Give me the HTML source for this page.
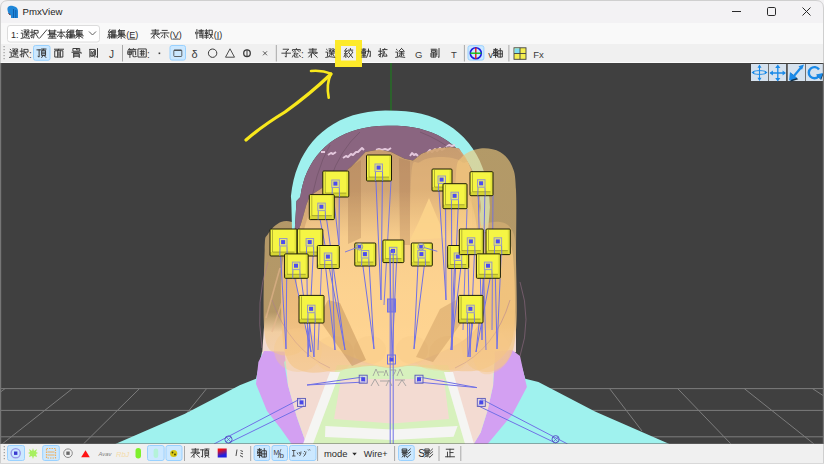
<!DOCTYPE html>
<html><head><meta charset="utf-8">
<style>
*{box-sizing:border-box;margin:0;padding:0}
html,body{width:824px;height:464px;overflow:hidden;background:#f0f0f0;font-family:"Liberation Sans",sans-serif;}
.abs{position:absolute}
</style></head><body>
<div class="abs" style="left:0;top:0;width:824px;height:23px;background:#f3f2f4"></div>
<div class="abs" style="left:0;top:23px;width:824px;height:21px;background:#f9f9f9"></div>
<div class="abs" style="left:0;top:44px;width:824px;height:19px;background:#f0f0f0"></div>
<div class="abs" style="left:0;top:62px;width:824px;height:1px;background:#fbfbfb"></div>
<div class="abs" style="left:0;top:444px;width:824px;height:20px;background:#f0f0f0"></div>
<svg class="abs" style="left:0;top:0" width="824" height="464" viewBox="0 0 824 464">
<defs><clipPath id="vc"><rect x="0" y="63" width="824" height="381"/></clipPath><linearGradient id="tg" gradientUnits="userSpaceOnUse" x1="0" y1="150" x2="0" y2="380"><stop offset="0" stop-color="#d2a474"/><stop offset="0.35" stop-color="#e6b67c"/><stop offset="0.72" stop-color="#f2c07f"/><stop offset="1" stop-color="#f4c383" stop-opacity="0.55"/></linearGradient><linearGradient id="fg" gradientUnits="userSpaceOnUse" x1="0" y1="190" x2="0" y2="295"><stop offset="0" stop-color="#ffd592" stop-opacity="0"/><stop offset="0.45" stop-color="#ffd592" stop-opacity="0.78"/><stop offset="1" stop-color="#ffd592" stop-opacity="0.92"/></linearGradient><linearGradient id="sk" gradientUnits="userSpaceOnUse" x1="0" y1="312" x2="0" y2="332"><stop offset="0" stop-color="#f3dbd2" stop-opacity="0"/><stop offset="1" stop-color="#f3dbd2"/></linearGradient><linearGradient id="lg" gradientUnits="userSpaceOnUse" x1="0" y1="150" x2="0" y2="375"><stop offset="0" stop-color="#f2c17c" stop-opacity="0.66"/><stop offset="0.75" stop-color="#f2c17c" stop-opacity="0.66"/><stop offset="1" stop-color="#f2c590" stop-opacity="0.4"/></linearGradient><linearGradient id="lg2" gradientUnits="userSpaceOnUse" x1="0" y1="150" x2="0" y2="375"><stop offset="0" stop-color="#eec87c" stop-opacity="0.66"/><stop offset="0.75" stop-color="#f0c47c" stop-opacity="0.66"/><stop offset="1" stop-color="#f2c590" stop-opacity="0.4"/></linearGradient></defs>
<g clip-path="url(#vc)">
<rect x="0" y="63" width="824" height="381" fill="#404040"/>
<line x1="0" y1="388.6" x2="824" y2="388.6" stroke="#7c7c7c" stroke-width="1"/>
<line x1="0" y1="410.4" x2="824" y2="410.4" stroke="#7c7c7c" stroke-width="1"/>
<line x1="0" y1="436.8" x2="824" y2="436.8" stroke="#7c7c7c" stroke-width="1"/>
<line x1="5" y1="388.6" x2="-2" y2="394" stroke="#7c7c7c" stroke-width="1"/>
<line x1="72.4" y1="388.6" x2="2.1" y2="444" stroke="#7c7c7c" stroke-width="1"/>
<line x1="139.5" y1="388.6" x2="83.4" y2="444" stroke="#7c7c7c" stroke-width="1"/>
<line x1="206.6" y1="388.6" x2="162" y2="444" stroke="#7c7c7c" stroke-width="1"/>
<line x1="609.6" y1="388.6" x2="642" y2="431" stroke="#7c7c7c" stroke-width="1"/>
<line x1="677.7" y1="388.6" x2="731" y2="444" stroke="#7c7c7c" stroke-width="1"/>
<line x1="744.3" y1="388.6" x2="814" y2="444" stroke="#7c7c7c" stroke-width="1"/>
<line x1="812.5" y1="388.6" x2="897" y2="444" stroke="#7c7c7c" stroke-width="1"/>

<line x1="391" y1="63" x2="391" y2="112" stroke="#1f7a1f" stroke-width="1.2"/>
<path d="M115.3 444.0 L185.0 413.7 L239.7 385.3 L256.0 378.7 L262.0 352.0 L300.0 345.0 L490.0 345.0 L519.0 357.0 L525.3 378.7 L538.4 382.0 L595.0 411.5 L669.4 444.0Z" fill="#9ff2ee"/>
<path d="M265 312 H516 V352 L495 362 H290 L262 356Z" fill="url(#sk)"/>
<path d="M264.0 351.0 L258.4 362.0 L256.0 384.0 L267.0 411.0 L280.5 428.3 L291.6 444.0 L306.3 444.0 L296.5 416.0 L288.0 385.3 L284.0 362.0 L296.0 352.0Z" fill="#d3a0f2"/>
<path d="M486.0 352.0 L512.0 350.0 L520.0 356.0 L524.8 378.0 L526.9 386.9 L512.4 414.5 L487.6 444.0 L473.8 444.0 L480.7 432.4 L487.6 410.3 L493.1 385.5 L495.0 355.0Z" fill="#d3a0f2"/>
<path d="M284.0 345.0 L288.0 385.3 L296.5 416.0 L306.3 444.0 L473.8 444.0 L480.7 432.4 L487.6 410.3 L493.1 385.5 L495.0 345.0Z" fill="#f3dbd2"/>
<path d="M337.0 365.0 L448.0 365.0 L473.0 444.0 L310.0 444.0Z" fill="#d7f1bd"/>
<path d="M341.0 379.0 L444.0 379.0 L449.0 419.0 L392.0 423.5 L334.0 419.0Z" fill="#f3dbd2"/>
<path d="M330.0 372.0 L340.0 372.0 L313.0 444.0 L303.0 444.0Z" fill="#f5f5f3"/>
<path d="M444.0 372.0 L453.0 372.0 L474.0 444.0 L465.0 444.0Z" fill="#f5f5f3"/>
<path d="M325.4 426.0 L392.0 429.5 L457.6 426.0 L453.6 436.8 L392.0 440.0 L325.0 437.0Z" fill="#f5f5f3"/>
<path d="M264.7 335.0C262.5 317.7 264.1 266.8 264.7 250.0C265.2 233.2 265.3 238.7 268.0 234.0C270.7 229.3 276.5 223.7 281.0 222.0C285.5 220.3 290.8 220.7 295.0 223.7C299.2 226.7 303.5 222.3 306.0 240.0C308.5 257.7 311.0 311.3 310.0 330.0C309.0 348.7 305.3 348.0 300.0 352.0C294.7 356.0 283.9 356.8 278.0 354.0C272.1 351.2 266.9 352.3 264.7 335.0Z" fill="url(#lg2)"/>
<path d="M292.0 229.0 L291.3 201.0 L290.9 196.2 L292.0 187.9 L293.6 180.1 L295.6 172.7 L298.2 165.7 L301.1 159.1 L304.5 152.9 L308.3 147.0 L312.6 141.6 L317.2 136.5 L322.3 131.9 L327.7 127.7 L333.5 123.9 L339.7 120.6 L346.2 117.7 L353.0 115.3 L360.3 113.4 L368.0 112.0 L376.2 111.1 L385.4 110.6 L396.7 110.7 L405.7 111.2 L413.7 112.3 L421.3 113.8 L428.5 115.8 L435.3 118.3 L441.7 121.3 L447.8 124.7 L453.5 128.6 L458.9 132.9 L463.8 137.6 L468.4 142.7 L472.5 148.3 L476.3 154.2 L479.6 160.5 L482.4 167.2 L484.9 174.3 L486.8 181.8 L488.3 189.7 L489.3 198.1 L489.9 207.3 L488.0 232.0 L478.0 232.0 L480.6 208.4 L480.1 200.6 L479.2 193.4 L477.8 186.7 L476.1 180.4 L473.9 174.4 L471.4 168.7 L468.4 163.3 L465.1 158.2 L461.3 153.5 L457.2 149.1 L452.8 145.0 L448.0 141.3 L442.9 138.0 L437.5 135.1 L431.7 132.5 L425.6 130.4 L419.2 128.6 L412.4 127.3 L405.2 126.3 L397.3 125.8 L387.2 125.7 L378.7 126.0 L371.2 126.8 L364.2 127.9 L357.6 129.4 L351.3 131.4 L345.4 133.8 L339.8 136.5 L334.5 139.6 L329.5 143.1 L324.9 147.0 L320.7 151.2 L316.8 155.8 L313.2 160.7 L310.1 165.9 L307.3 171.5 L304.9 177.3 L303.0 183.5 L301.4 190.0 L300.3 196.9 L296.5 201.0 L294.8 229.0Z" fill="#9ff1ee"/>
<path d="M296.5 201.0 L300.3 196.9 L301.4 190.0 L303.0 183.5 L304.9 177.3 L307.3 171.5 L310.1 165.9 L313.2 160.7 L316.8 155.8 L320.7 151.2 L324.9 147.0 L329.5 143.1 L334.5 139.6 L339.8 136.5 L345.4 133.8 L351.3 131.4 L357.6 129.4 L364.2 127.9 L371.2 126.8 L378.7 126.0 L387.2 125.7 L397.3 125.8 L405.2 126.3 L412.4 127.3 L419.2 128.6 L425.6 130.4 L431.7 132.5 L437.5 135.1 L442.9 138.0 L448.0 141.3 L452.8 145.0 L457.2 149.1 L461.3 153.5 L465.1 158.2 L468.4 163.3 L471.4 168.7 L473.9 174.4 L476.1 180.4 L477.8 186.7 L479.2 193.4 L480.1 200.6 L480.6 208.4 L478.0 200.0 L466.0 160.0 L459.0 148.6 L450.4 146.9 L435.0 148.6 L421.5 153.7 L413.0 160.5 L404.6 158.8 L391.0 152.0 L379.0 149.4 L365.5 152.0 L351.0 167.0 L337.0 178.0 L322.0 188.0 L309.8 196.0 L306.3 205.0 L303.0 217.0 L299.4 229.0 L294.8 229.0Z" fill="#8a6580"/>
<path d="M321 152h4 M328 155l3-2 2 1 3-2 M343 158l3-2 2 1 3-3 2 1 3-3 2 0 4-4 2 2 M376 150l3-1 3 1 3-1 3 1 3-2 M410 156l2-3 2 2 2-1 2 2 M427 153l3-3 2 2 3-3 2 2 3-3 2 2 3-2 M446 147l3-2 3 1 3-1" stroke="#ecd2e6" stroke-width="2" fill="none" stroke-linejoin="round" opacity="0.9"/>
<path d="M330 145 Q315 170 308 220 M360 132 Q340 150 330 180 M420 132 Q440 140 452 150" stroke="#5a4050" stroke-width="0.6" fill="none" opacity="0.6"/>
<path d="M299.4 229.0 L303.0 217.0 L306.3 205.0 L309.8 196.0 L322.0 188.0 L337.0 178.0 L351.0 167.0 L365.5 152.0 L379.0 149.4 L391.0 152.0 L404.6 158.8 L413.0 160.5 L421.5 153.7 L435.0 148.6 L450.4 146.9 L459.0 148.6 L466.0 158.0 C467.3 161.3 471.8 170.2 474.0 178.0C476.2 185.8 477.3 196.0 479.0 205.0C480.7 214.0 479.2 226.2 484.0 232.0C488.8 237.8 503.0 233.7 508.0 240.0C513.0 246.3 513.0 255.0 514.0 270.0C515.0 285.0 515.7 315.8 514.0 330.0C512.3 344.2 509.7 348.3 504.0 355.0C498.3 361.7 489.8 367.5 480.0 370.0C470.2 372.5 456.3 370.7 445.0 370.0C433.7 369.3 421.0 366.3 412.0 366.0C403.0 365.7 398.0 368.0 391.0 368.0C384.0 368.0 378.8 365.7 370.0 366.0C361.2 366.3 348.7 369.0 338.0 370.0C327.3 371.0 314.7 374.3 306.0 372.0C297.3 369.7 290.2 368.0 286.0 356.0C281.8 344.0 281.3 316.8 281.0 300.0C280.7 283.2 280.9 266.8 284.0 255.0C287.1 243.2 296.8 233.3 299.4 229.0Z" fill="url(#tg)" fill-opacity="0.93"/>
<path d="M456.0 175.0C457.0 159.5 457.9 161.4 462.0 157.0C466.1 152.6 474.1 149.4 480.4 148.6C486.7 147.8 494.7 149.1 500.0 152.0C505.3 154.9 509.3 159.7 512.0 166.0C514.7 172.3 515.3 174.3 516.0 190.0C516.7 205.7 516.0 236.7 516.0 260.0C516.0 283.3 517.3 313.3 516.0 330.0C514.7 346.7 513.2 353.0 508.0 360.0C502.8 367.0 492.7 373.7 485.0 372.0C477.3 370.3 466.8 370.3 462.0 350.0C457.2 329.7 457.0 279.2 456.0 250.0C455.0 220.8 455.0 190.5 456.0 175.0Z" fill="url(#lg2)"/>
<path d="M411.0 180.0C412.5 152.0 415.0 165.8 420.0 162.0C425.0 158.2 434.0 157.0 441.0 157.0C448.0 157.0 457.0 158.2 462.0 162.0C467.0 165.8 469.3 152.0 471.0 180.0C472.7 208.0 473.8 299.0 472.0 330.0C470.2 361.0 468.7 360.0 460.0 366.0C451.3 372.0 428.2 372.0 420.0 366.0C411.8 360.0 412.5 361.0 411.0 330.0C409.5 299.0 409.5 208.0 411.0 180.0Z" fill="rgba(248,200,130,0.35)"/>
<path d="M470.0 250.0C471.7 233.0 473.0 232.7 478.0 228.0C483.0 223.3 494.2 221.3 500.0 222.0C505.8 222.7 510.3 225.7 513.0 232.0C515.7 238.3 515.5 243.7 516.0 260.0C516.5 276.3 517.8 312.5 516.0 330.0C514.2 347.5 511.0 358.0 505.0 365.0C499.0 372.0 486.2 377.8 480.0 372.0C473.8 366.2 469.7 350.3 468.0 330.0C466.3 309.7 468.3 267.0 470.0 250.0Z" fill="rgba(248,200,130,0.35)"/>
<path d="M315.0 200.0C322.8 186.7 332.2 184.7 345.0 180.0C357.8 175.3 376.5 172.0 392.0 172.0C407.5 172.0 425.0 175.3 438.0 180.0C451.0 184.7 463.0 186.7 470.0 200.0C477.0 213.3 478.0 241.7 480.0 260.0C482.0 278.3 483.7 297.5 482.0 310.0C480.3 322.5 478.3 327.3 470.0 335.0C461.7 342.7 445.2 350.7 432.0 356.0C418.8 361.3 404.7 367.0 391.0 367.0C377.3 367.0 363.2 361.3 350.0 356.0C336.8 350.7 320.3 342.7 312.0 335.0C303.7 327.3 302.3 322.5 300.0 310.0C297.7 297.5 295.5 278.3 298.0 260.0C300.5 241.7 307.2 213.3 315.0 200.0Z" fill="url(#fg)"/>
<path d="M266 318 L280 268 M272 332 L286 290" stroke="#e8b890" stroke-width="1.6" opacity="0.6"/>
<path d="M268 262 Q255 300 262 348 M520 282 Q532 320 520 356 M272 300 Q290 350 330 368 M510 300 Q495 350 455 368" stroke="#a87898" stroke-width="0.8" fill="none" opacity="0.6"/>
<ellipse cx="298" cy="350" rx="24" ry="22" fill="#f6c888" fill-opacity="0.35"/>
<ellipse cx="334" cy="354" rx="20" ry="18" fill="#f6c888" fill-opacity="0.35"/>
<ellipse cx="370" cy="350" rx="16" ry="14" fill="#f6c888" fill-opacity="0.35"/>
<ellipse cx="412" cy="350" rx="16" ry="14" fill="#f6c888" fill-opacity="0.35"/>
<ellipse cx="449" cy="354" rx="20" ry="18" fill="#f6c888" fill-opacity="0.35"/>
<ellipse cx="486" cy="350" rx="24" ry="22" fill="#f6c888" fill-opacity="0.35"/>
<path d="M348 168 L361 160 L361 238 L348 244Z" fill="#9a6a48" fill-opacity="0.28"/>
<path d="M399 158 L410 161 L410 245 L400 245Z" fill="#9a6a48" fill-opacity="0.26"/><path d="M429 198 Q436 215 446 238 L410 240 Q420 220 429 198Z" fill="#fdd58c" fill-opacity="0.85"/>
<path d="M318 318 L328 300 L340 303 L366 360 L352 366Z" fill="#a06a38" fill-opacity="0.32"/>
<path d="M416 357 L440 309 L456 300 L462 322 L433 362Z" fill="#a06a38" fill-opacity="0.24"/>
<path d="M375.5 171.0L381.0 300.0L382.5 171.0" stroke="#7070e6" stroke-width="1" fill="none"/><path d="M332.3 187.0L339.0 245.0L339.3 187.0" stroke="#7070e6" stroke-width="1" fill="none"/><path d="M318.3 210.1L345.0 350.0L325.3 210.1" stroke="#7070e6" stroke-width="1" fill="none"/><path d="M438.5 183.0L446.0 300.0L445.5 183.0" stroke="#7070e6" stroke-width="1" fill="none"/><path d="M451.5 199.2L452.0 350.0L458.5 199.2" stroke="#7070e6" stroke-width="1" fill="none"/><path d="M478.0 186.7L482.0 340.0L485.0 186.7" stroke="#7070e6" stroke-width="1" fill="none"/><path d="M280.0 245.5L286.0 349.0L287.0 245.5" stroke="#7070e6" stroke-width="1" fill="none"/><path d="M306.6 245.5L308.0 357.0L313.6 245.5" stroke="#7070e6" stroke-width="1" fill="none"/><path d="M292.9 269.1L311.0 352.0L299.9 269.1" stroke="#7070e6" stroke-width="1" fill="none"/><path d="M324.8 260.0L335.0 350.0L331.8 260.0" stroke="#7070e6" stroke-width="1" fill="none"/><path d="M361.8 257.5L374.0 349.0L368.8 257.5" stroke="#7070e6" stroke-width="1" fill="none"/><path d="M389.9 254.3L392.0 357.0L396.9 254.3" stroke="#7070e6" stroke-width="1" fill="none"/><path d="M418.3 257.5L414.0 349.0L425.3 257.5" stroke="#7070e6" stroke-width="1" fill="none"/><path d="M454.7 260.0L451.0 350.0L461.7 260.0" stroke="#7070e6" stroke-width="1" fill="none"/><path d="M467.8 244.8L470.0 357.0L474.8 244.8" stroke="#7070e6" stroke-width="1" fill="none"/><path d="M494.6 244.8L497.0 349.0L501.6 244.8" stroke="#7070e6" stroke-width="1" fill="none"/><path d="M484.9 269.1L476.0 352.0L491.9 269.1" stroke="#7070e6" stroke-width="1" fill="none"/><path d="M308.0 312.2L314.0 357.0L315.0 312.2" stroke="#7070e6" stroke-width="1" fill="none"/><path d="M467.3 312.2L468.0 357.0L474.3 312.2" stroke="#7070e6" stroke-width="1" fill="none"/><line x1="391" y1="181" x2="384" y2="305" stroke="#7070e6" stroke-width="0.9"/><line x1="467" y1="209" x2="463" y2="330" stroke="#7070e6" stroke-width="0.9"/><line x1="493" y1="195" x2="492" y2="330" stroke="#7070e6" stroke-width="0.9"/><line x1="322" y1="256" x2="318" y2="350" stroke="#7070e6" stroke-width="0.9"/><line x1="483" y1="255" x2="486" y2="350" stroke="#7070e6" stroke-width="0.9"/>
<rect x="366.5" y="155.0" width="25.0" height="26.0" fill="#f5f544"/><rect x="366.5" y="177.0" width="25.0" height="4" fill="#d6d634"/><rect x="389.0" y="155.0" width="2.5" height="26.0" fill="#e2e23a"/><path d="M369.0 156.0V177.0H389.0" fill="none" stroke="#5a5a18" stroke-width="0.6" opacity="0.7"/><rect x="366.5" y="155.0" width="25.0" height="26.0" fill="none" stroke="#1c1c06" stroke-width="1" rx="1"/><rect x="375.0" y="164.0" width="7.5" height="7.5" fill="#e8e870" stroke="#9a9ac0" stroke-width="1"/><rect x="376.6" y="165.6" width="4" height="4" fill="#4c4cf0"/><line x1="375.5" y1="172.0" x2="375.3" y2="181.0" stroke="#7070e6" stroke-width="0.9"/><line x1="382.5" y1="172.0" x2="382.7" y2="181.0" stroke="#7070e6" stroke-width="0.9"/>
<rect x="322.8" y="171.0" width="26.0" height="26.0" fill="#f5f544"/><rect x="322.8" y="193.0" width="26.0" height="4" fill="#d6d634"/><rect x="346.3" y="171.0" width="2.5" height="26.0" fill="#e2e23a"/><path d="M325.3 172.0V193.0H346.3" fill="none" stroke="#5a5a18" stroke-width="0.6" opacity="0.7"/><rect x="322.8" y="171.0" width="26.0" height="26.0" fill="none" stroke="#1c1c06" stroke-width="1" rx="1"/><rect x="331.8" y="180.0" width="7.5" height="7.5" fill="#e8e870" stroke="#9a9ac0" stroke-width="1"/><rect x="333.4" y="181.6" width="4" height="4" fill="#4c4cf0"/><line x1="332.3" y1="188.0" x2="332.1" y2="197.0" stroke="#7070e6" stroke-width="0.9"/><line x1="339.3" y1="188.0" x2="339.5" y2="197.0" stroke="#7070e6" stroke-width="0.9"/>
<rect x="309.3" y="194.6" width="25.0" height="25.0" fill="#f5f544"/><rect x="309.3" y="215.6" width="25.0" height="4" fill="#d6d634"/><rect x="331.8" y="194.6" width="2.5" height="25.0" fill="#e2e23a"/><path d="M311.8 195.6V215.6H331.8" fill="none" stroke="#5a5a18" stroke-width="0.6" opacity="0.7"/><rect x="309.3" y="194.6" width="25.0" height="25.0" fill="none" stroke="#1c1c06" stroke-width="1" rx="1"/><rect x="317.8" y="203.1" width="7.5" height="7.5" fill="#e8e870" stroke="#9a9ac0" stroke-width="1"/><rect x="319.4" y="204.7" width="4" height="4" fill="#4c4cf0"/><line x1="318.3" y1="211.1" x2="318.1" y2="219.6" stroke="#7070e6" stroke-width="0.9"/><line x1="325.3" y1="211.1" x2="325.5" y2="219.6" stroke="#7070e6" stroke-width="0.9"/>
<rect x="432.0" y="169.0" width="20.0" height="22.0" fill="#f5f544"/><rect x="432.0" y="187.0" width="20.0" height="4" fill="#d6d634"/><rect x="449.5" y="169.0" width="2.5" height="22.0" fill="#e2e23a"/><path d="M434.5 170.0V187.0H449.5" fill="none" stroke="#5a5a18" stroke-width="0.6" opacity="0.7"/><rect x="432.0" y="169.0" width="20.0" height="22.0" fill="none" stroke="#1c1c06" stroke-width="1" rx="1"/><rect x="438.0" y="176.0" width="7.5" height="7.5" fill="#e8e870" stroke="#9a9ac0" stroke-width="1"/><rect x="439.6" y="177.6" width="4" height="4" fill="#4c4cf0"/><line x1="438.5" y1="184.0" x2="438.3" y2="191.0" stroke="#7070e6" stroke-width="0.9"/><line x1="445.5" y1="184.0" x2="445.7" y2="191.0" stroke="#7070e6" stroke-width="0.9"/>
<rect x="443.0" y="183.7" width="24.0" height="25.0" fill="#f5f544"/><rect x="443.0" y="204.7" width="24.0" height="4" fill="#d6d634"/><rect x="464.5" y="183.7" width="2.5" height="25.0" fill="#e2e23a"/><path d="M445.5 184.7V204.7H464.5" fill="none" stroke="#5a5a18" stroke-width="0.6" opacity="0.7"/><rect x="443.0" y="183.7" width="24.0" height="25.0" fill="none" stroke="#1c1c06" stroke-width="1" rx="1"/><rect x="451.0" y="192.2" width="7.5" height="7.5" fill="#e8e870" stroke="#9a9ac0" stroke-width="1"/><rect x="452.6" y="193.8" width="4" height="4" fill="#4c4cf0"/><line x1="451.5" y1="200.2" x2="451.3" y2="208.7" stroke="#7070e6" stroke-width="0.9"/><line x1="458.5" y1="200.2" x2="458.7" y2="208.7" stroke="#7070e6" stroke-width="0.9"/>
<rect x="470.0" y="171.7" width="23.0" height="24.0" fill="#f5f544"/><rect x="470.0" y="191.7" width="23.0" height="4" fill="#d6d634"/><rect x="490.5" y="171.7" width="2.5" height="24.0" fill="#e2e23a"/><path d="M472.5 172.7V191.7H490.5" fill="none" stroke="#5a5a18" stroke-width="0.6" opacity="0.7"/><rect x="470.0" y="171.7" width="23.0" height="24.0" fill="none" stroke="#1c1c06" stroke-width="1" rx="1"/><rect x="477.5" y="179.7" width="7.5" height="7.5" fill="#e8e870" stroke="#9a9ac0" stroke-width="1"/><rect x="479.1" y="181.3" width="4" height="4" fill="#4c4cf0"/><line x1="478.0" y1="187.7" x2="477.8" y2="195.7" stroke="#7070e6" stroke-width="0.9"/><line x1="485.0" y1="187.7" x2="485.2" y2="195.7" stroke="#7070e6" stroke-width="0.9"/>
<rect x="270.0" y="229.0" width="27.0" height="27.0" fill="#f5f544"/><rect x="270.0" y="252.0" width="27.0" height="4" fill="#d6d634"/><rect x="294.5" y="229.0" width="2.5" height="27.0" fill="#e2e23a"/><path d="M272.5 230.0V252.0H294.5" fill="none" stroke="#5a5a18" stroke-width="0.6" opacity="0.7"/><rect x="270.0" y="229.0" width="27.0" height="27.0" fill="none" stroke="#1c1c06" stroke-width="1" rx="1"/><rect x="279.5" y="238.5" width="7.5" height="7.5" fill="#e8e870" stroke="#9a9ac0" stroke-width="1"/><rect x="281.1" y="240.1" width="4" height="4" fill="#4c4cf0"/><line x1="280.0" y1="246.5" x2="279.8" y2="256.0" stroke="#7070e6" stroke-width="0.9"/><line x1="287.0" y1="246.5" x2="287.2" y2="256.0" stroke="#7070e6" stroke-width="0.9"/>
<rect x="297.3" y="229.0" width="25.5" height="27.0" fill="#f5f544"/><rect x="297.3" y="252.0" width="25.5" height="4" fill="#d6d634"/><rect x="320.3" y="229.0" width="2.5" height="27.0" fill="#e2e23a"/><path d="M299.8 230.0V252.0H320.3" fill="none" stroke="#5a5a18" stroke-width="0.6" opacity="0.7"/><rect x="297.3" y="229.0" width="25.5" height="27.0" fill="none" stroke="#1c1c06" stroke-width="1" rx="1"/><rect x="306.1" y="238.5" width="7.5" height="7.5" fill="#e8e870" stroke="#9a9ac0" stroke-width="1"/><rect x="307.7" y="240.1" width="4" height="4" fill="#4c4cf0"/><line x1="306.6" y1="246.5" x2="306.4" y2="256.0" stroke="#7070e6" stroke-width="0.9"/><line x1="313.6" y1="246.5" x2="313.8" y2="256.0" stroke="#7070e6" stroke-width="0.9"/>
<rect x="284.6" y="253.9" width="23.6" height="24.4" fill="#f5f544"/><rect x="284.6" y="274.3" width="23.6" height="4" fill="#d6d634"/><rect x="305.7" y="253.9" width="2.5" height="24.4" fill="#e2e23a"/><path d="M287.1 254.9V274.3H305.7" fill="none" stroke="#5a5a18" stroke-width="0.6" opacity="0.7"/><rect x="284.6" y="253.9" width="23.6" height="24.4" fill="none" stroke="#1c1c06" stroke-width="1" rx="1"/><rect x="292.4" y="262.1" width="7.5" height="7.5" fill="#e8e870" stroke="#9a9ac0" stroke-width="1"/><rect x="294.0" y="263.7" width="4" height="4" fill="#4c4cf0"/><line x1="292.9" y1="270.1" x2="292.7" y2="278.3" stroke="#7070e6" stroke-width="0.9"/><line x1="299.9" y1="270.1" x2="300.1" y2="278.3" stroke="#7070e6" stroke-width="0.9"/>
<rect x="317.3" y="245.5" width="22.0" height="23.0" fill="#f5f544"/><rect x="317.3" y="264.5" width="22.0" height="4" fill="#d6d634"/><rect x="336.8" y="245.5" width="2.5" height="23.0" fill="#e2e23a"/><path d="M319.8 246.5V264.5H336.8" fill="none" stroke="#5a5a18" stroke-width="0.6" opacity="0.7"/><rect x="317.3" y="245.5" width="22.0" height="23.0" fill="none" stroke="#1c1c06" stroke-width="1" rx="1"/><rect x="324.3" y="253.0" width="7.5" height="7.5" fill="#e8e870" stroke="#9a9ac0" stroke-width="1"/><rect x="325.9" y="254.6" width="4" height="4" fill="#4c4cf0"/><line x1="324.8" y1="261.0" x2="324.6" y2="268.5" stroke="#7070e6" stroke-width="0.9"/><line x1="331.8" y1="261.0" x2="332.0" y2="268.5" stroke="#7070e6" stroke-width="0.9"/>
<rect x="354.8" y="243.0" width="21.0" height="23.0" fill="#f5f544"/><rect x="354.8" y="262.0" width="21.0" height="4" fill="#d6d634"/><rect x="373.3" y="243.0" width="2.5" height="23.0" fill="#e2e23a"/><path d="M357.3 244.0V262.0H373.3" fill="none" stroke="#5a5a18" stroke-width="0.6" opacity="0.7"/><rect x="354.8" y="243.0" width="21.0" height="23.0" fill="none" stroke="#1c1c06" stroke-width="1" rx="1"/><rect x="361.3" y="250.5" width="7.5" height="7.5" fill="#e8e870" stroke="#9a9ac0" stroke-width="1"/><rect x="362.9" y="252.1" width="4" height="4" fill="#4c4cf0"/><line x1="361.8" y1="258.5" x2="361.6" y2="266.0" stroke="#7070e6" stroke-width="0.9"/><line x1="368.8" y1="258.5" x2="369.0" y2="266.0" stroke="#7070e6" stroke-width="0.9"/>
<rect x="382.9" y="240.0" width="21.0" height="22.6" fill="#f5f544"/><rect x="382.9" y="258.6" width="21.0" height="4" fill="#d6d634"/><rect x="401.4" y="240.0" width="2.5" height="22.6" fill="#e2e23a"/><path d="M385.4 241.0V258.6H401.4" fill="none" stroke="#5a5a18" stroke-width="0.6" opacity="0.7"/><rect x="382.9" y="240.0" width="21.0" height="22.6" fill="none" stroke="#1c1c06" stroke-width="1" rx="1"/><rect x="389.4" y="247.3" width="7.5" height="7.5" fill="#e8e870" stroke="#9a9ac0" stroke-width="1"/><rect x="391.0" y="248.9" width="4" height="4" fill="#4c4cf0"/><line x1="389.9" y1="255.3" x2="389.7" y2="262.6" stroke="#7070e6" stroke-width="0.9"/><line x1="396.9" y1="255.3" x2="397.1" y2="262.6" stroke="#7070e6" stroke-width="0.9"/>
<rect x="411.3" y="243.0" width="21.0" height="23.0" fill="#f5f544"/><rect x="411.3" y="262.0" width="21.0" height="4" fill="#d6d634"/><rect x="429.8" y="243.0" width="2.5" height="23.0" fill="#e2e23a"/><path d="M413.8 244.0V262.0H429.8" fill="none" stroke="#5a5a18" stroke-width="0.6" opacity="0.7"/><rect x="411.3" y="243.0" width="21.0" height="23.0" fill="none" stroke="#1c1c06" stroke-width="1" rx="1"/><rect x="417.8" y="250.5" width="7.5" height="7.5" fill="#e8e870" stroke="#9a9ac0" stroke-width="1"/><rect x="419.4" y="252.1" width="4" height="4" fill="#4c4cf0"/><line x1="418.3" y1="258.5" x2="418.1" y2="266.0" stroke="#7070e6" stroke-width="0.9"/><line x1="425.3" y1="258.5" x2="425.5" y2="266.0" stroke="#7070e6" stroke-width="0.9"/>
<rect x="447.7" y="245.5" width="21.0" height="23.0" fill="#f5f544"/><rect x="447.7" y="264.5" width="21.0" height="4" fill="#d6d634"/><rect x="466.2" y="245.5" width="2.5" height="23.0" fill="#e2e23a"/><path d="M450.2 246.5V264.5H466.2" fill="none" stroke="#5a5a18" stroke-width="0.6" opacity="0.7"/><rect x="447.7" y="245.5" width="21.0" height="23.0" fill="none" stroke="#1c1c06" stroke-width="1" rx="1"/><rect x="454.2" y="253.0" width="7.5" height="7.5" fill="#e8e870" stroke="#9a9ac0" stroke-width="1"/><rect x="455.8" y="254.6" width="4" height="4" fill="#4c4cf0"/><line x1="454.7" y1="261.0" x2="454.5" y2="268.5" stroke="#7070e6" stroke-width="0.9"/><line x1="461.7" y1="261.0" x2="461.9" y2="268.5" stroke="#7070e6" stroke-width="0.9"/>
<rect x="459.3" y="229.0" width="24.0" height="25.6" fill="#f5f544"/><rect x="459.3" y="250.6" width="24.0" height="4" fill="#d6d634"/><rect x="480.8" y="229.0" width="2.5" height="25.6" fill="#e2e23a"/><path d="M461.8 230.0V250.6H480.8" fill="none" stroke="#5a5a18" stroke-width="0.6" opacity="0.7"/><rect x="459.3" y="229.0" width="24.0" height="25.6" fill="none" stroke="#1c1c06" stroke-width="1" rx="1"/><rect x="467.3" y="237.8" width="7.5" height="7.5" fill="#e8e870" stroke="#9a9ac0" stroke-width="1"/><rect x="468.9" y="239.4" width="4" height="4" fill="#4c4cf0"/><line x1="467.8" y1="245.8" x2="467.6" y2="254.6" stroke="#7070e6" stroke-width="0.9"/><line x1="474.8" y1="245.8" x2="475.0" y2="254.6" stroke="#7070e6" stroke-width="0.9"/>
<rect x="486.0" y="229.0" width="24.3" height="25.6" fill="#f5f544"/><rect x="486.0" y="250.6" width="24.3" height="4" fill="#d6d634"/><rect x="507.8" y="229.0" width="2.5" height="25.6" fill="#e2e23a"/><path d="M488.5 230.0V250.6H507.8" fill="none" stroke="#5a5a18" stroke-width="0.6" opacity="0.7"/><rect x="486.0" y="229.0" width="24.3" height="25.6" fill="none" stroke="#1c1c06" stroke-width="1" rx="1"/><rect x="494.1" y="237.8" width="7.5" height="7.5" fill="#e8e870" stroke="#9a9ac0" stroke-width="1"/><rect x="495.8" y="239.4" width="4" height="4" fill="#4c4cf0"/><line x1="494.6" y1="245.8" x2="494.4" y2="254.6" stroke="#7070e6" stroke-width="0.9"/><line x1="501.6" y1="245.8" x2="501.8" y2="254.6" stroke="#7070e6" stroke-width="0.9"/>
<rect x="476.4" y="253.9" width="24.0" height="24.4" fill="#f5f544"/><rect x="476.4" y="274.3" width="24.0" height="4" fill="#d6d634"/><rect x="497.9" y="253.9" width="2.5" height="24.4" fill="#e2e23a"/><path d="M478.9 254.9V274.3H497.9" fill="none" stroke="#5a5a18" stroke-width="0.6" opacity="0.7"/><rect x="476.4" y="253.9" width="24.0" height="24.4" fill="none" stroke="#1c1c06" stroke-width="1" rx="1"/><rect x="484.4" y="262.1" width="7.5" height="7.5" fill="#e8e870" stroke="#9a9ac0" stroke-width="1"/><rect x="486.0" y="263.7" width="4" height="4" fill="#4c4cf0"/><line x1="484.9" y1="270.1" x2="484.7" y2="278.3" stroke="#7070e6" stroke-width="0.9"/><line x1="491.9" y1="270.1" x2="492.1" y2="278.3" stroke="#7070e6" stroke-width="0.9"/>
<rect x="299.0" y="295.4" width="25.0" height="27.6" fill="#f5f544"/><rect x="299.0" y="319.0" width="25.0" height="4" fill="#d6d634"/><rect x="321.5" y="295.4" width="2.5" height="27.6" fill="#e2e23a"/><path d="M301.5 296.4V319.0H321.5" fill="none" stroke="#5a5a18" stroke-width="0.6" opacity="0.7"/><rect x="299.0" y="295.4" width="25.0" height="27.6" fill="none" stroke="#1c1c06" stroke-width="1" rx="1"/><rect x="307.5" y="305.2" width="7.5" height="7.5" fill="#e8e870" stroke="#9a9ac0" stroke-width="1"/><rect x="309.1" y="306.8" width="4" height="4" fill="#4c4cf0"/><line x1="308.0" y1="313.2" x2="307.8" y2="323.0" stroke="#7070e6" stroke-width="0.9"/><line x1="315.0" y1="313.2" x2="315.2" y2="323.0" stroke="#7070e6" stroke-width="0.9"/>
<rect x="458.6" y="295.4" width="24.4" height="27.6" fill="#f5f544"/><rect x="458.6" y="319.0" width="24.4" height="4" fill="#d6d634"/><rect x="480.5" y="295.4" width="2.5" height="27.6" fill="#e2e23a"/><path d="M461.1 296.4V319.0H480.5" fill="none" stroke="#5a5a18" stroke-width="0.6" opacity="0.7"/><rect x="458.6" y="295.4" width="24.4" height="27.6" fill="none" stroke="#1c1c06" stroke-width="1" rx="1"/><rect x="466.8" y="305.2" width="7.5" height="7.5" fill="#e8e870" stroke="#9a9ac0" stroke-width="1"/><rect x="468.4" y="306.8" width="4" height="4" fill="#4c4cf0"/><line x1="467.3" y1="313.2" x2="467.1" y2="323.0" stroke="#7070e6" stroke-width="0.9"/><line x1="474.3" y1="313.2" x2="474.5" y2="323.0" stroke="#7070e6" stroke-width="0.9"/>
<path d="M345 252 L357 247.5 M437.3 251.3 L424 247.5" stroke="#7070e6" stroke-width="0.9"/>
<circle cx="359.4" cy="246.7" r="3.3" fill="#e8e870" fill-opacity="0.6" stroke="#8a8ac0" stroke-width="0.9"/><rect x="357.6" y="244.9" width="3.6" height="3.6" fill="#4c4cf0"/>
<circle cx="421" cy="246.7" r="3.3" fill="#e8e870" fill-opacity="0.6" stroke="#8a8ac0" stroke-width="0.9"/><rect x="419.2" y="244.9" width="3.6" height="3.6" fill="#4c4cf0"/>
<line x1="390.2" y1="250" x2="390.2" y2="444" stroke="#7070e6" stroke-width="1"/><line x1="393.2" y1="250" x2="393.2" y2="444" stroke="#7070e6" stroke-width="1"/>
<rect x="387.5" y="299" width="8" height="13" fill="#6c6ce4" fill-opacity="0.6" stroke="#7070e6"/>
<rect x="387.5" y="355" width="8" height="9" fill="none" stroke="#7070e6" stroke-width="1"/><rect x="389.5" y="357.5" width="4" height="4" fill="#5050ee"/>
<path d="M307 385 L363 377 L365 382Z" stroke="#7070e6" stroke-width="1" fill="none"/><rect x="359.2" y="375.2" width="8" height="8" fill="#d8d8f0" fill-opacity="0.5" stroke="#5858b8" stroke-width="0.9"/><rect x="361.2" y="377.2" width="4" height="4" fill="#4848e8"/>
<path d="M477 387.6 L419 377 L417 382Z" stroke="#7070e6" stroke-width="1" fill="none"/><rect x="415.0" y="375.2" width="8" height="8" fill="#d8d8f0" fill-opacity="0.5" stroke="#5858b8" stroke-width="0.9"/><rect x="417.0" y="377.2" width="4" height="4" fill="#4848e8"/>
<path d="M214 444 L300 399 L304 406 L228.5 443" stroke="#7070e6" stroke-width="1" fill="none"/><rect x="297.5" y="398.4" width="8" height="8" fill="#d8d8f0" fill-opacity="0.5" stroke="#5858b8" stroke-width="0.9"/><rect x="299.5" y="400.4" width="4" height="4" fill="#4848e8"/>
<path d="M567.6 444 L481.3 399 L478.5 406 L555.6 443" stroke="#7070e6" stroke-width="1" fill="none"/><rect x="477.3" y="398.4" width="8" height="8" fill="#d8d8f0" fill-opacity="0.5" stroke="#5858b8" stroke-width="0.9"/><rect x="479.3" y="400.4" width="4" height="4" fill="#4848e8"/>
<circle cx="228.5" cy="439.5" r="3.6" fill="none" stroke="#5a5ac8"/><path d="M226 437l5 5M231 437l-5 5" stroke="#5a5ac8" stroke-width="0.7"/>
<circle cx="555.6" cy="439.2" r="3.6" fill="none" stroke="#5a5ac8"/><path d="M553 437l5 5M558 437l-5 5" stroke="#5a5ac8" stroke-width="0.7"/>
<g stroke="#9a9a9a" stroke-width="0.9" fill="none" opacity="0.9"><path d="M373 376l3-7 3 7M378 372h6M384 376l2-6 2 6M390 370h6l-3 6M397 376l3-7 3 7 M371 386l4-7 4 7M380 381h8M386 386l3-6 3 6M395 380h10M398 386l4-6 4 6"/></g>
<path d="M246 140 Q262 126 285 112 Q310 94 331 74" stroke="#f8e81c" stroke-width="3.2" fill="none" stroke-linecap="round"/>
<path d="M311 71 Q322 70 331 73.6 Q326 84 328.7 97.8" stroke="#f8e81c" stroke-width="2.6" fill="none" stroke-linecap="round" stroke-linejoin="round"/>
<rect x="0" y="443" width="824" height="1" fill="#6a6a6a" fill-opacity="0.55"/>
</g>
<path d="M335 40H362V67H335Z M341 46V60.6H356V46Z" fill="#fdea2a" fill-rule="evenodd"/>
<rect x="751" y="64" width="17" height="17" fill="#d6e2ee"/>
<rect x="769" y="64" width="17" height="17" fill="#d6e2ee"/>
<rect x="788" y="64" width="17" height="17" fill="#d6e2ee"/>
<rect x="806" y="64" width="17" height="17" fill="#d6e2ee"/>
<rect x="768" y="64" width="1" height="17" fill="#707070"/><rect x="786.5" y="64" width="1.5" height="17" fill="#707070"/><rect x="805" y="64" width="1" height="17" fill="#707070"/>
<g fill="#1a8ae8" stroke="#1a8ae8"><path d="M759.5 66V80" stroke-width="1.1" fill="none"/><ellipse cx="759.5" cy="72.5" rx="7" ry="1.9" fill="none" stroke-width="0.9"/><path d="M759.5 64.5l-2 3.2h4z M759.5 81l-2-3.2h4z M751.5 72.5l2.8-1.8v3.6z M767.5 72.5l-2.8-1.8v3.6z" stroke="none"/><path d="M777.8 66.5V79.5M770.5 73H785" stroke-width="1.3" fill="none"/><path d="M777.8 64.5l-2.6 3.4h5.2z M777.8 81.5l-2.6-3.4h5.2z M769.5 73l3.4-2.6v5.2z M786 73l-3.4-2.6v5.2z" stroke="none"/><path d="M789.5 81l1-8.5 7 6z" fill="#10304a" stroke="none" transform="translate(0.8,0.8)"/><path d="M789 80.5l1-8.5 7 6z" stroke="none"/><path d="M793.5 76.5L801.5 67" stroke-width="2.2" fill="none"/><path d="M804 64.5l-5.5 1.8 3.5 3.5z" stroke="none"/><path d="M818.5 76.5A5.6 5.6 0 1 1 819 69.5" stroke-width="2.4" fill="none"/><path d="M816 74.5l7-1.5-2.5 6.5z" fill="#10304a" stroke="none" transform="translate(0.6,0.6)"/><path d="M816 74.5l7-1.5-2.5 6.5z" stroke="none"/></g>
</svg>
<svg class="abs" style="left:0;top:0" width="824" height="464" viewBox="0 0 824 464">
<path d="M0.5 464V8Q0.5 0.5 8 0.5H816Q823.5 0.5 823.5 8V464" fill="none" stroke="#cfcfcf"/>
<path d="M7.5 10 C7 6 10 5.5 13 6 C16.5 6.5 18 8.5 18 11 L18 18 L11 18 L11 15 C9 15 8 13 7.5 10Z" fill="#1f86d8"/><path d="M13.5 9V18M15.8 10V18" stroke="#0d5aa8" stroke-width="0.9"/><path d="M8.5 13.5 L10.5 15" stroke="#6a2a2a" stroke-width="1"/>
<text x="22.6" y="15.2" font-size="9.6" fill="#1b1b1b" font-family="Liberation Sans">PmxView</text>
<line x1="732" y1="11.5" x2="741" y2="11.5" stroke="#2a2a2a" stroke-width="1"/>
<rect x="767.5" y="7.5" width="8" height="8" rx="1.2" fill="none" stroke="#2a2a2a" stroke-width="1"/>
<path d="M802.5 7.5L810.5 15.5M810.5 7.5L802.5 15.5" stroke="#2a2a2a" stroke-width="1"/>
<rect x="7.5" y="25.5" width="92" height="16.5" rx="2.5" fill="#ffffff" stroke="#dcdcdc"/>
<text x="11" y="37.5" font-size="9" fill="#2a2a2a" font-family="Liberation Sans">1:</text>
<path d="M21.69 30.22L22.55 31.12M21.17 33.10H22.72V37.15M21.00 38.32Q23.58 36.88 29.60 38.32M24.01 29.95H25.99V31.48H24.27V32.65H26.16M26.85 29.95H28.91V31.48H27.19V32.65H29.17M24.01 34.00H29.17M24.87 35.08H28.31M26.59 33.28V36.25M24.87 36.25L24.27 37.15M28.31 36.25L28.91 37.15" stroke="#3a3a3a" stroke-width="0.95" fill="none" stroke-linecap="round"/><path d="M30.38 32.20H33.56M32.01 29.50V38.05L30.98 37.15M30.12 35.98L33.56 34.45M34.25 30.40H38.12V33.10H34.25M34.25 30.40V34.00L33.56 38.05M35.28 33.10L38.38 38.05" stroke="#3a3a3a" stroke-width="0.95" fill="none" stroke-linecap="round"/><path d="M39.4 38.5L47.0 29.5" stroke="#3a3a3a" stroke-width="0.95"/><path d="M49.57 29.95V34.45M54.73 29.95V34.45M48.28 30.85H56.02M49.57 32.20H54.73M49.57 33.55H54.73M47.85 34.72H56.45M50.86 34.90L49.14 36.52M53.44 34.90L55.16 36.52M52.15 35.35V38.05M49.57 36.70H54.73M48.28 38.14H56.02" stroke="#3a3a3a" stroke-width="0.95" fill="none" stroke-linecap="round"/><path d="M57.23 32.20H64.97M61.10 29.50V38.50M60.93 32.38L57.23 36.70M61.27 32.38L64.97 36.70M59.38 36.25H62.82" stroke="#3a3a3a" stroke-width="0.95" fill="none" stroke-linecap="round"/><path d="M68.16 29.50L66.44 32.20L68.67 32.38M69.02 31.30L66.27 35.08L69.36 34.72M67.64 34.90V38.50M66.44 36.52L65.92 37.78M68.67 36.52L69.36 37.60M70.05 30.22H73.92M70.05 31.30H73.92V32.65H70.05ZM70.05 31.30V34.45L69.62 38.05M70.48 34.00H74.18V38.05M70.48 34.00V38.05M71.60 34.00V38.05M72.80 34.00V38.05M70.48 35.98H74.18" stroke="#3a3a3a" stroke-width="0.95" fill="none" stroke-linecap="round"/><path d="M77.28 29.50L75.99 31.75M76.85 30.58V34.45M76.85 30.58H82.44M79.00 30.58V34.45M76.85 32.02H82.01M76.85 33.28H82.01M76.42 34.45H82.44M74.70 35.80H83.30M79.00 34.45V38.50M78.57 35.80L75.56 38.05M79.43 35.80L82.87 38.05" stroke="#3a3a3a" stroke-width="0.95" fill="none" stroke-linecap="round"/>
<path d="M89 31.5L92.5 35L96 31.5" stroke="#606060" fill="none" stroke-width="1"/>
<path d="M109.91 29.50L108.19 32.20L110.42 32.38M110.77 31.30L108.02 35.08L111.11 34.72M109.39 34.90V38.50M108.19 36.52L107.67 37.78M110.42 36.52L111.11 37.60M111.80 30.22H115.67M111.80 31.30H115.67V32.65H111.80ZM111.80 31.30V34.45L111.37 38.05M112.23 34.00H115.93V38.05M112.23 34.00V38.05M113.35 34.00V38.05M114.55 34.00V38.05M112.23 35.98H115.93" stroke="#3a3a3a" stroke-width="0.95" fill="none" stroke-linecap="round"/><path d="M119.48 29.50L118.19 31.75M119.05 30.58V34.45M119.05 30.58H124.64M121.20 30.58V34.45M119.05 32.02H124.21M119.05 33.28H124.21M118.62 34.45H124.64M116.90 35.80H125.50M121.20 34.45V38.50M120.77 35.80L117.76 38.05M121.63 35.80L125.07 38.05" stroke="#3a3a3a" stroke-width="0.95" fill="none" stroke-linecap="round"/><text x="126.3" y="37.6" font-size="9" fill="#2a2a2a" font-family="Liberation Sans">(<tspan text-decoration="underline">E</tspan>)</text>
<path d="M151.86 30.22H158.74M152.29 32.02H158.31M151.00 33.82H159.60M155.30 29.50V33.82M154.87 33.82L151.43 38.05M154.01 35.35V38.50M155.73 34.45L159.43 38.32M157.45 34.45L159.17 34.00" stroke="#3a3a3a" stroke-width="0.95" fill="none" stroke-linecap="round"/><path d="M162.12 30.40H167.28M160.40 32.92H169.00M164.70 32.92V38.05L163.84 37.42M162.81 34.90L161.26 37.15M166.59 34.90L168.31 37.15" stroke="#3a3a3a" stroke-width="0.95" fill="none" stroke-linecap="round"/><text x="169.8" y="37.6" font-size="9" fill="#2a2a2a" font-family="Liberation Sans">(<tspan text-decoration="underline">V</tspan>)</text>
<path d="M196.89 29.50V38.50M195.52 32.20L195.86 34.00M198.10 32.02L197.58 33.28M198.87 30.40H203.43M199.30 31.75H203.17M198.61 33.10H203.60M201.19 29.50V33.10M199.47 34.00H202.91V38.50M199.47 35.62H202.91M199.47 37.06H202.91" stroke="#3a3a3a" stroke-width="0.95" fill="none" stroke-linecap="round"/><path d="M204.83 30.85H208.01M206.38 29.50V38.50M205.09 33.55H207.84M204.57 35.35H208.36M205.26 32.20L205.69 33.10M207.50 32.20L206.98 33.10M204.57 37.15H208.36M209.13 30.22H212.31V33.55L211.71 33.10M209.13 30.22V34.00M209.13 34.45H212.57L209.56 38.50M209.99 34.90L212.83 38.50" stroke="#3a3a3a" stroke-width="0.95" fill="none" stroke-linecap="round"/><text x="213.8" y="37.6" font-size="9" fill="#2a2a2a" font-family="Liberation Sans">(<tspan text-decoration="underline">I</tspan>)</text>
<rect x="3.5" y="46" width="1.2" height="1.2" fill="#9a9a9a"/>
<rect x="3.5" y="49" width="1.2" height="1.2" fill="#9a9a9a"/>
<rect x="3.5" y="52" width="1.2" height="1.2" fill="#9a9a9a"/>
<rect x="3.5" y="55" width="1.2" height="1.2" fill="#9a9a9a"/>
<rect x="3.5" y="58" width="1.2" height="1.2" fill="#9a9a9a"/>
<path d="M10.20 49.22L11.08 50.12M9.68 52.10H11.26V56.15M9.50 57.32Q12.14 55.88 18.30 57.32M12.58 48.95H14.60V50.48H12.84V51.65H14.78M15.48 48.95H17.60V50.48H15.84V51.65H17.86M12.58 53.00H17.86M13.46 54.08H16.98M15.22 52.28V55.25M13.46 55.25L12.84 56.15M16.98 55.25L17.60 56.15" stroke="#3a3a3a" stroke-width="0.95" fill="none" stroke-linecap="round"/><path d="M20.14 51.20H23.40M21.81 48.50V57.05L20.76 56.15M19.88 54.98L23.40 53.45M24.10 49.40H28.06V52.10H24.10M24.10 49.40V53.00L23.40 57.05M25.16 52.10L28.32 57.05" stroke="#3a3a3a" stroke-width="0.95" fill="none" stroke-linecap="round"/>
<text x="29" y="57.5" font-size="10" fill="#3a3a3a" font-family="Liberation Sans">:</text>
<rect x="33.5" y="45.5" width="16.5" height="14.799999999999997" rx="2" fill="#cce8ff" stroke="#99d1ff"/>
<path d="M36.90 49.85H40.76M39.11 49.85V57.05L38.00 56.42M41.50 49.04H46.10M43.52 49.04L42.97 50.30M42.05 50.30H45.55V55.52H42.05ZM42.05 52.10H45.55M42.05 53.81H45.55M42.60 56.06L41.68 57.50M44.63 56.06L45.92 57.50" stroke="#333333" stroke-width="0.95" fill="none" stroke-linecap="round"/>
<path d="M54.40 49.22H63.60M58.54 49.22L57.90 50.75M55.14 50.75H62.86V57.05H55.14ZM57.71 50.75V57.05M60.29 50.75V57.05M57.71 53.00H60.29M57.71 54.98H60.29" stroke="#333333" stroke-width="0.95" fill="none" stroke-linecap="round"/>
<path d="M73.28 48.50H79.72V51.20H73.28ZM76.50 48.50V49.85H78.34M71.90 52.28H81.10V53.45M73.74 53.45H79.26V57.50M73.74 53.45V57.50M73.74 54.98H79.26M73.74 56.24H79.26" stroke="#333333" stroke-width="0.95" fill="none" stroke-linecap="round"/>
<path d="M89.86 49.40V57.05M89.86 49.40H94.74V57.05M91.06 51.20L91.70 52.10M93.54 51.20L92.90 52.10M90.50 53.00H94.00M92.16 53.00V56.15M90.78 54.80V56.15H93.54V54.80M95.38 49.85V54.80M97.50 48.50V57.50L96.58 56.78" stroke="#333333" stroke-width="0.95" fill="none" stroke-linecap="round"/>
<text x="109" y="57.5" font-size="10" fill="#3a3a3a" font-family="Liberation Sans">J</text>
<line x1="122.5" y1="45" x2="122.5" y2="61.5" stroke="#a8a8a8" stroke-width="1"/>
<path d="M129.46 48.50L128.14 50.30M128.76 49.40H131.66M130.34 49.40L131.04 50.30M133.42 48.50L132.28 50.30M132.80 49.40H136.06M134.56 49.40L135.18 50.30M128.14 51.20H131.66V54.35H128.14ZM128.14 52.82H131.66M129.90 50.75V57.50M132.54 51.20H135.62V54.80M132.98 51.20V56.60Q134.74 57.05 136.32 56.60" stroke="#3a3a3a" stroke-width="0.95" fill="none" stroke-linecap="round"/><path d="M138.34 48.95H146.26V57.05H138.34ZM140.10 51.65H144.50M140.10 53.90H144.50M141.42 50.30V55.70M143.18 50.30V55.70" stroke="#3a3a3a" stroke-width="0.95" fill="none" stroke-linecap="round"/>
<text x="147" y="57.5" font-size="10" fill="#3a3a3a" font-family="Liberation Sans">:</text>
<rect x="158.6" y="52.5" width="1.6" height="1.6" fill="#3a3a3a"/>
<rect x="170.0" y="45.5" width="15.5" height="14.600000000000001" rx="2" fill="#cce8ff" stroke="#99d1ff"/>
<rect x="173.8" y="50" width="8" height="6.5" rx="0.8" fill="none" stroke="#404040" stroke-width="0.8"/><line x1="174" y1="50.4" x2="181.6" y2="50.4" stroke="#404040" stroke-width="0.9"/>
<text x="191.5" y="57.8" font-size="11" fill="#3a3a3a" font-family="Liberation Sans">δ</text>
<circle cx="212.6" cy="53.2" r="4.2" fill="none" stroke="#3a3a3a" stroke-width="1"/>
<path d="M230 48.8L234.5 57.2H225.5Z" fill="none" stroke="#3a3a3a" stroke-width="0.9"/>
<circle cx="247" cy="53.2" r="3.3" fill="none" stroke="#3a3a3a" stroke-width="1.3"/><line x1="247" y1="49.5" x2="247" y2="57" stroke="#3a3a3a" stroke-width="1"/>
<path d="M263 51.3L267 55.3M267 51.3L263 55.3" stroke="#4a4a4a" stroke-width="0.9"/>
<line x1="276.3" y1="45" x2="276.3" y2="61.5" stroke="#a8a8a8" stroke-width="1"/>
<path d="M283.12 49.22H288.84L286.20 51.65M286.20 51.65V57.05L285.14 56.42M281.80 53.18H290.60" stroke="#3a3a3a" stroke-width="0.95" fill="none" stroke-linecap="round"/><path d="M296.40 48.50V49.40M292.44 50.75V49.58H300.36V50.75M295.08 50.30L293.32 52.10M297.72 50.30L299.48 52.10M295.52 51.65L294.20 53.90M294.20 53.90H298.16L297.28 53.00M293.32 55.25L292.44 57.05M294.64 54.80V57.05H298.16M296.40 54.80L296.84 55.70M299.48 55.25L300.36 56.60" stroke="#3a3a3a" stroke-width="0.95" fill="none" stroke-linecap="round"/>
<text x="301" y="57.5" font-size="10" fill="#3a3a3a" font-family="Liberation Sans">:</text>
<path d="M309.12 49.22H316.48M309.58 51.02H316.02M308.20 52.82H317.40M312.80 48.50V52.82M312.34 52.82L308.66 57.05M311.42 54.35V57.50M313.26 53.45L317.22 57.32M315.10 53.45L316.94 53.00" stroke="#333333" stroke-width="0.95" fill="none" stroke-linecap="round"/>
<path d="M326.44 49.22L327.36 50.12M325.88 52.10H327.54V56.15M325.70 57.32Q328.46 55.88 334.90 57.32M328.92 48.95H331.04V50.48H329.20V51.65H331.22M331.96 48.95H334.16V50.48H332.32V51.65H334.44M328.92 53.00H334.44M329.84 54.08H333.52M331.68 52.28V55.25M329.84 55.25L329.20 56.15M333.52 55.25L334.16 56.15" stroke="#333333" stroke-width="0.95" fill="none" stroke-linecap="round"/>
<path d="M346.38 48.50L344.54 51.20L346.93 51.38M347.30 50.30L344.35 54.08L347.66 53.72M345.82 53.90V57.50M344.54 55.52L343.98 56.78M346.93 55.52L347.66 56.60M350.42 48.50V49.58M348.40 50.12H352.82M349.32 51.20L348.58 52.55M351.90 51.20L352.63 52.55M349.14 53.00L352.54 57.50M352.26 53.00L348.58 57.50" stroke="#333333" stroke-width="0.95" fill="none" stroke-linecap="round"/>
<path d="M362.06 49.22H365.74M363.90 48.50V57.05M362.34 50.75H365.46V53.90H362.34ZM362.34 52.28H365.46M362.06 55.25H365.74M361.78 57.05H366.02M366.66 51.20H370.34V56.60L369.42 56.15M368.50 48.95V52.10L366.66 57.32" stroke="#333333" stroke-width="0.95" fill="none" stroke-linecap="round"/>
<path d="M378.56 51.20H381.96M380.31 48.50V57.05L379.20 56.15M378.28 54.98L381.96 53.45M384.72 48.50V49.40M382.70 49.58H387.12M383.16 49.58V53.90L382.24 57.05M384.54 51.65L383.62 56.15H386.84M385.92 53.90L386.84 55.70" stroke="#333333" stroke-width="0.95" fill="none" stroke-linecap="round"/>
<path d="M396.34 49.22L397.26 50.12M395.78 52.10H397.44V56.15M395.60 57.32Q398.36 55.88 404.80 57.32M401.58 48.50L398.82 51.20M401.58 48.50L404.34 51.20M399.74 51.65H403.42M399.10 53.18H404.06M401.58 51.65V56.15L400.94 55.70M400.20 54.35L399.28 55.70M402.96 54.35L403.88 55.70" stroke="#333333" stroke-width="0.95" fill="none" stroke-linecap="round"/>
<path d="M431.08 49.22H436.24M431.82 50.30H435.50V52.10H431.82ZM431.36 53.00H435.96V57.05H431.36ZM431.36 54.98H435.96M433.66 53.00V57.05M436.88 49.85V54.80M439.00 48.50V57.50L438.08 56.78" stroke="#333333" stroke-width="0.95" fill="none" stroke-linecap="round"/>
<text x="415" y="57.5" font-size="9.5" fill="#3a3a3a" font-family="Liberation Sans">G</text>
<text x="451" y="57.5" font-size="9.5" fill="#3a3a3a" font-family="Liberation Sans">T</text>
<line x1="464.4" y1="45" x2="464.4" y2="61.5" stroke="#a8a8a8" stroke-width="1"/>
<rect x="468.0" y="45.7" width="15.899999999999977" height="14.399999999999999" rx="2" fill="#cce8ff" stroke="#99d1ff"/>
<circle cx="475.8" cy="53.2" r="5.5" fill="none" stroke="#1a1ae0" stroke-width="1.6"/><line x1="475.8" y1="47.5" x2="475.8" y2="59" stroke="#e01a1a" stroke-width="1.4"/><line x1="470.3" y1="53.2" x2="481.3" y2="53.2" stroke="#10c010" stroke-width="1.4"/>
<text x="488.2" y="57.5" font-size="9.5" fill="#3a3a3a" font-family="Liberation Sans">v</text>
<path d="M493.68 49.40H497.46M494.04 50.75H497.10V54.08H494.04ZM494.04 52.46H497.10M493.50 55.52H497.64M495.57 48.50V57.50M498.18 50.75H502.32V57.05H498.18ZM498.18 53.90H502.32M500.25 48.50V57.05" stroke="#333333" stroke-width="0.95" fill="none" stroke-linecap="round"/>
<line x1="508.9" y1="45" x2="508.9" y2="61.5" stroke="#a8a8a8" stroke-width="1"/>
<rect x="514" y="47.8" width="12" height="11.5" fill="#f4ee50" stroke="#404040" stroke-width="0.9"/><rect x="514.5" y="48.3" width="5.5" height="5.3" fill="#80dcf0"/><line x1="520" y1="47.8" x2="520" y2="59.3" stroke="#404040" stroke-width="0.9"/><line x1="514" y1="53.5" x2="526" y2="53.5" stroke="#404040" stroke-width="0.9"/>
<text x="533.3" y="57.5" font-size="9.5" fill="#3a3a3a" font-family="Liberation Sans">Fx</text>
<line x1="0" y1="463.5" x2="824" y2="463.5" stroke="#d8d8d8"/>
<rect x="3.7" y="446" width="1.2" height="1.2" fill="#9a9a9a"/>
<rect x="3.7" y="449" width="1.2" height="1.2" fill="#9a9a9a"/>
<rect x="3.7" y="452" width="1.2" height="1.2" fill="#9a9a9a"/>
<rect x="3.7" y="455" width="1.2" height="1.2" fill="#9a9a9a"/>
<rect x="3.7" y="458" width="1.2" height="1.2" fill="#9a9a9a"/>
<rect x="7.5" y="445.5" width="17" height="15" rx="2" fill="#cce8ff" stroke="#99d1ff"/>
<circle cx="15.7" cy="453.2" r="4.6" fill="none" stroke="#9a9ae8" stroke-width="1.4"/><rect x="14" y="451.5" width="3.4" height="3.4" fill="#3a3ad0"/>
<path d="M28 453l2-1-1-3 3 2 1-3 1 3 3-2-1 3 2 1-2 1 1 3-3-1-1 3-1-3-3 1 1-3z" fill="#a8f060"/>
<rect x="42.7" y="445.5" width="16.599999999999994" height="15" rx="2" fill="#cce8ff" stroke="#99d1ff"/>
<rect x="46.5" y="448.5" width="9" height="9.5" fill="none" stroke="#f0b060" stroke-width="1.2" stroke-dasharray="1.5 1"/><path d="M47.5 452H54.5M47.5 455H54.5" stroke="#f0b060" stroke-width="1.1"/>
<circle cx="68" cy="453.2" r="4.3" fill="none" stroke="#8a8a8a" stroke-width="1"/><rect x="66.3" y="451.5" width="3.4" height="3.4" fill="#6a6a6a"/>
<path d="M85.5 450.3L89.8 457.2H81.2Z" fill="#ff1414"/>
<text x="98.5" y="455.5" font-size="5.8" font-style="italic" fill="#808080" font-family="Liberation Sans">Avav</text>
<text x="116" y="457" font-size="7.5" font-style="italic" fill="#f4dcaa" font-family="Liberation Sans">RbJ</text>
<rect x="135.5" y="448" width="5.5" height="10.4" rx="2.7" fill="#7ef02c"/>
<rect x="147.5" y="445.5" width="16.599999999999994" height="15" rx="2" fill="#cce8ff" stroke="#99d1ff"/>
<rect x="153.6" y="448.5" width="4.6" height="9.5" rx="2.3" fill="#b4f2d8"/>
<rect x="166.0" y="445.5" width="16.0" height="15" rx="2" fill="#cce8ff" stroke="#99d1ff"/>
<circle cx="173.7" cy="453.5" r="3.6" fill="#d8c818"/><circle cx="172.5" cy="452.5" r="0.9" fill="#404000"/><circle cx="175" cy="454.5" r="0.9" fill="#404000"/>
<line x1="184.5" y1="446" x2="184.5" y2="461" stroke="#a8a8a8" stroke-width="1"/>
<path d="M191.86 449.22H198.74M192.29 451.02H198.31M191.00 452.82H199.60M195.30 448.50V452.82M194.87 452.82L191.43 457.05M194.01 454.35V457.50M195.73 453.45L199.43 457.32M197.45 453.45L199.17 453.00" stroke="#3a3a3a" stroke-width="0.95" fill="none" stroke-linecap="round"/><path d="M200.50 449.85H204.11M202.56 449.85V457.05L201.53 456.42M204.80 449.04H209.10M206.69 449.04L206.18 450.30M205.32 450.30H208.58V455.52H205.32ZM205.32 452.10H208.58M205.32 453.81H208.58M205.83 456.06L204.97 457.50M207.72 456.06L208.93 457.50" stroke="#3a3a3a" stroke-width="0.95" fill="none" stroke-linecap="round"/>
<defs><linearGradient id="rb" x1="0" y1="0" x2="0.3" y2="1"><stop offset="0.2" stop-color="#f01010"/><stop offset="0.85" stop-color="#2020e0"/></linearGradient></defs><rect x="217.7" y="448.5" width="9" height="9" fill="url(#rb)"/>
<path d="M237 449.5L236 456M240.5 450.5l2.5 1M240.5 453l2.5 1M240 455.5l3 1.5" stroke="#3a3a3a" stroke-width="0.9" fill="none"/>
<line x1="250.7" y1="446" x2="250.7" y2="461" stroke="#a8a8a8" stroke-width="1"/>
<rect x="254.1" y="445.5" width="15.599999999999994" height="15" rx="2" fill="#cce8ff" stroke="#99d1ff"/>
<path d="M257.68 449.40H261.46M258.04 450.75H261.10V454.08H258.04ZM258.04 452.46H261.10M257.50 455.52H261.64M259.57 448.50V457.50M262.18 450.75H266.32V457.05H262.18ZM262.18 453.90H266.32M264.25 448.50V457.05" stroke="#303030" stroke-width="0.9" fill="none" stroke-linecap="round"/>
<rect x="272.0" y="445.5" width="15.5" height="15" rx="2" fill="#cce8ff" stroke="#99d1ff"/>
<text x="273.5" y="455" font-size="7" fill="#3a3a3a" font-family="Liberation Sans">M</text><text x="279.5" y="458" font-size="8" fill="#3a3a3a" font-family="Liberation Sans">b</text><line x1="278" y1="458" x2="281" y2="449" stroke="#3a3a3a" stroke-width="0.6"/>
<rect x="289.5" y="445.5" width="26.5" height="15" rx="2" fill="#cce8ff" stroke="#99d1ff"/>
<path d="M292 450.5h3.5M293.7 450.5v5.5M292 456h3.5M297 452.5l1 2M299 452l1 2M301 451.5q0 3-1.5 4.5M304 451l1 1M303.5 453.5l1 1M306 451.5q0 3.5-2.5 5M308 449.5l.7 1M309.5 449.3l.7 1" stroke="#3a3a3a" stroke-width="0.8" fill="none"/>
<line x1="317.6" y1="446" x2="317.6" y2="461" stroke="#a8a8a8" stroke-width="1"/>
<text x="324" y="456.8" font-size="9.4" fill="#2a2a2a" font-family="Liberation Sans">mode</text>
<path d="M352.3 452.8h4.5l-2.25 2.6z" fill="#2a2a2a"/>
<text x="363.7" y="456.8" font-size="9" fill="#2a2a2a" font-family="Liberation Sans">Wire+</text>
<line x1="394.6" y1="446" x2="394.6" y2="461" stroke="#a8a8a8" stroke-width="1"/>
<rect x="398.5" y="445.5" width="15.699999999999989" height="15" rx="2" fill="#cce8ff" stroke="#99d1ff"/>
<path d="M402.52 448.95H406.75V451.65H402.52ZM402.52 450.30H406.75M401.98 452.55H407.38M403.15 453.45H406.30V454.98H403.15ZM404.68 454.98V457.05L404.05 456.60M403.15 455.88L402.25 457.05M406.12 455.88L407.02 457.05M410.35 448.95L407.92 451.20M410.53 451.65L407.65 454.08M410.62 454.35L407.20 457.32" stroke="#303030" stroke-width="0.9" fill="none" stroke-linecap="round"/>
<text x="418.3" y="457" font-size="10" fill="#2a2a2a" font-family="Liberation Sans">S</text>
<path d="M425.18 448.95H429.18V451.65H425.18ZM425.18 450.30H429.18M424.67 452.55H429.77M425.77 453.45H428.75V454.98H425.77ZM427.22 454.98V457.05L426.62 456.60M425.77 455.88L424.93 457.05M428.58 455.88L429.43 457.05M432.57 448.95L430.28 451.20M432.75 451.65L430.02 454.08M432.83 454.35L429.60 457.32" stroke="#303030" stroke-width="0.85" fill="none" stroke-linecap="round"/>
<line x1="439" y1="446" x2="439" y2="461" stroke="#a8a8a8" stroke-width="1"/>
<path d="M446.22 449.22H453.78M450.00 449.22V456.78M450.00 452.55H453.15M447.48 452.10V456.78M445.50 456.78H454.50" stroke="#3a3a3a" stroke-width="0.95" fill="none" stroke-linecap="round"/>
<line x1="460.8" y1="446" x2="460.8" y2="461" stroke="#a8a8a8" stroke-width="1"/>
<rect x="0" y="63" width="1.2" height="381" fill="#767676"/><rect x="822.8" y="63" width="1.2" height="381" fill="#767676"/>
</svg>
</body></html>
